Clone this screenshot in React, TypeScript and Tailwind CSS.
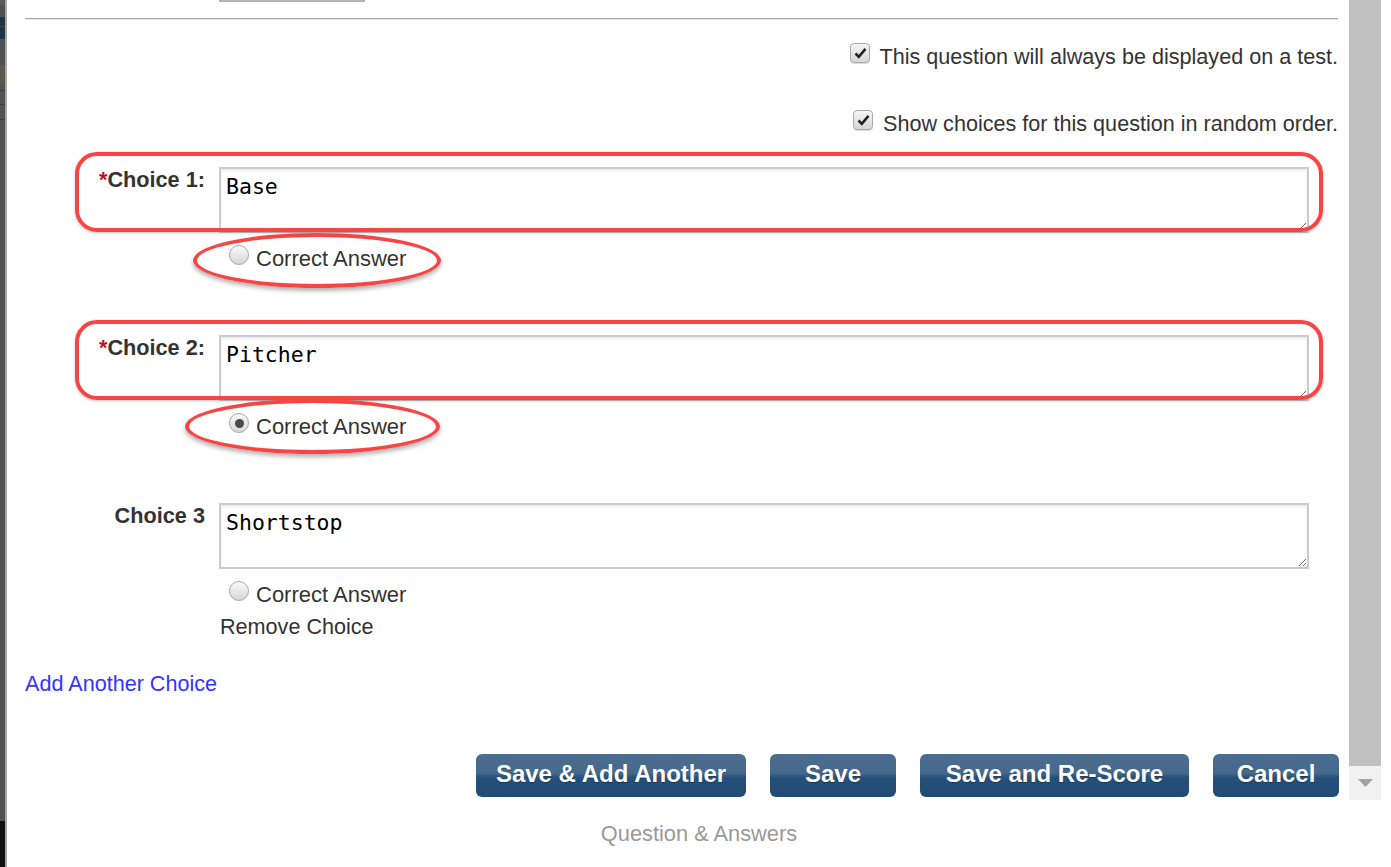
import React from "react";

const font = { fontFamily: '"Liberation Sans", Arial, sans-serif' };

function CheckBox() {
  return (
    <span className="inline-flex h-[20px] w-[20px] shrink-0 items-center justify-center rounded-[4px] border border-[#a9a9a9] bg-[linear-gradient(to_bottom,#f6f6f6,#d6d6d6)] shadow-[0_1px_1px_rgba(0,0,0,0.15)]">
      <svg width="13" height="12" viewBox="0 0 13 12">
        <path d="M1.5 6.5 L4.8 9.8 L11.5 1.8" fill="none" stroke="#222" strokeWidth="2.6" />
      </svg>
    </span>
  );
}

function Radio({ checked }: { checked?: boolean }) {
  return (
    <span className="mt-[2px] inline-flex h-[20px] w-[20px] shrink-0 items-center justify-center rounded-full border border-[#a8a8a8] bg-[linear-gradient(to_bottom,#fafafa,#d6d6d6)]">
      {checked && <span className="h-[9px] w-[9px] rounded-full bg-[#4a4a4a]" />}
    </span>
  );
}

type Choice = {
  label: string;
  required: boolean;
  value: string;
  checked: boolean;
  marked: boolean;
  removable: boolean;
};

const choices: Choice[] = [
  { label: "Choice 1:", required: true, value: "Base", checked: false, marked: true, removable: false },
  { label: "Choice 2:", required: true, value: "Pitcher", checked: true, marked: true, removable: false },
  { label: "Choice 3", required: false, value: "Shortstop", checked: false, marked: false, removable: true },
];

function ChoiceBlock({ c, idx }: { c: Choice; idx: number }) {
  return (
    <div className="relative">
      <div className="flex">
        <div className="w-[180px] pt-[1px] text-right text-[21.7px] font-bold leading-[24px] text-[#333]">
          {c.required && <span className="text-[#c0141c]">*</span>}
          {c.label}
        </div>
        <textarea
          readOnly
          defaultValue={c.value}
          className="ml-[14px] h-[66px] w-[1090px] border-2 border-[#cccccc] bg-white px-[5px] pt-[5px] text-[21.5px] leading-[26px] text-black shadow-[inset_0_2px_3px_rgba(0,0,0,0.08)] outline-none"
          style={{ fontFamily: '"DejaVu Sans Mono", monospace' }}
        />
      </div>
      <div className="ml-[204px] mt-[10px] flex h-[24px] items-start gap-[7px] text-[22px] leading-[24px] text-[#333]">
        <Radio checked={c.checked} />
        <span className="mt-[4px]">Correct Answer</span>
      </div>
      {c.removable && (
        <div className="ml-[195px] mt-[12px] h-[24px] text-[21.6px] leading-[24px] text-[#333]">Remove Choice</div>
      )}

      {/* red annotation marks */}
      {c.marked && (
        <>
          <div className="pointer-events-none absolute left-[50px] top-[-15px] h-[80px] w-[1248px] rounded-[22px] border-[4px] border-[#f94444] shadow-[0_1px_3px_rgba(0,0,0,0.25)]" />
          <div
            className={
              idx === 0
                ? "pointer-events-none absolute left-[168px] top-[66px] h-[55px] w-[248px] rounded-[50%] border-[4px] border-[#f94444] shadow-[0_3px_4px_rgba(0,0,0,0.3)]"
                : "pointer-events-none absolute left-[160px] top-[64px] h-[55px] w-[255px] rounded-[50%] border-[4px] border-[#f94444] shadow-[0_3px_4px_rgba(0,0,0,0.3)]"
            }
          />
        </>
      )}
    </div>
  );
}

function Button({ label, w }: { label: string; w: string }) {
  return (
    <button
      className={`${w} h-[43px] rounded-[6px] bg-[linear-gradient(to_bottom,#4c6e90_0%,#45688b_45%,#25507a_55%,#224b71_100%)] pb-[3px] text-[24px] font-bold text-white [text-shadow:0_1px_1px_rgba(0,0,0,0.3)]`}
    >
      {label}
    </button>
  );
}

export default function App() {
  return (
    <div className="flex h-[867px] w-full overflow-hidden bg-white" style={font}>
      {/* page behind the dialog */}
      <div className="flex w-[5px] shrink-0 flex-col">
        <div className="h-[5px] bg-[#5a5a5a]" />
        <div className="h-[12px] bg-[#505050]" />
        <div className="h-[9px] bg-[#1d3447]" />
        <div className="h-[1px] bg-[#444]" />
        <div className="h-[12px] bg-[#1d3447]" />
        <div className="h-[26px] bg-[#4f4f4f]" />
        <div className="h-[18px] bg-[#5a5a4b]" />
        <div className="h-[7px] bg-[#525252]" />
        <div className="h-[1px] bg-[#3a3a3a]" />
        <div className="h-[13px] bg-[#525252]" />
        <div className="h-[1px] bg-[#3a3a3a]" />
        <div className="h-[14px] bg-[#525252]" />
        <div className="h-[1px] bg-[#3a3a3a]" />
        <div className="flex-1 bg-[#525252]" />
        <div className="h-[46px] bg-[#101010]" />
      </div>
      <div className="w-[2px] shrink-0 bg-[#a6a6a6]" />

      {/* dialog */}
      <div className="flex flex-1 flex-col">
        <div className="flex h-[800px]">
          <div className="flex-1 pl-[18px] pr-[11px]">
            <div className="ml-[194px] h-[2px] w-[146px] bg-[#b5b5b5]" />
            <div className="mt-[16px] h-[2px] border-t border-[#a8a8a8] bg-[#e6e6e6]" />

            <div className="mt-[23px] flex h-[24px] items-start justify-end gap-[9px] text-[21.6px] leading-[24px] text-[#333]">
              <CheckBox />
              <span className="mt-[2px]">This question will always be displayed on a test.</span>
            </div>
            <div className="mt-[43px] flex h-[24px] items-start justify-end gap-[10px] text-[21.6px] leading-[24px] text-[#333]">
              <CheckBox />
              <span className="mt-[2px]">Show choices for this question in random order.</span>
            </div>

            <div className="mt-[33px] flex flex-col gap-[68px]">
              {choices.map((c, i) => (
                <ChoiceBlock key={c.label} c={c} idx={i} />
              ))}
            </div>

            <div className="mt-[33px] h-[24px] text-[21.6px] leading-[24px] text-[#3333ff]">Add Another Choice</div>

            <div className="-mr-px mt-[58px] flex justify-end gap-[24px]">
              <Button label="Save & Add Another" w="w-[270px]" />
              <Button label="Save" w="w-[126px]" />
              <Button label="Save and Re-Score" w="w-[269px]" />
              <Button label="Cancel" w="w-[126px]" />
            </div>
          </div>

          {/* scrollbar */}
          <div className="flex w-[32px] shrink-0 flex-col bg-[#f1f1f1]">
            <div className="h-[766px] bg-[#c1c1c1]" />
            <div className="flex flex-1 items-center justify-center">
              <svg width="15" height="8" viewBox="0 0 15 8">
                <path d="M0 0 H15 L7.5 8 Z" fill="#a3a3a3" />
              </svg>
            </div>
          </div>
          <div className="w-[10px] shrink-0" />
        </div>

        <div className="pt-[22px] text-center text-[21.8px] leading-[24px] text-[#999]">Question &amp; Answers</div>
      </div>
    </div>
  );
}
